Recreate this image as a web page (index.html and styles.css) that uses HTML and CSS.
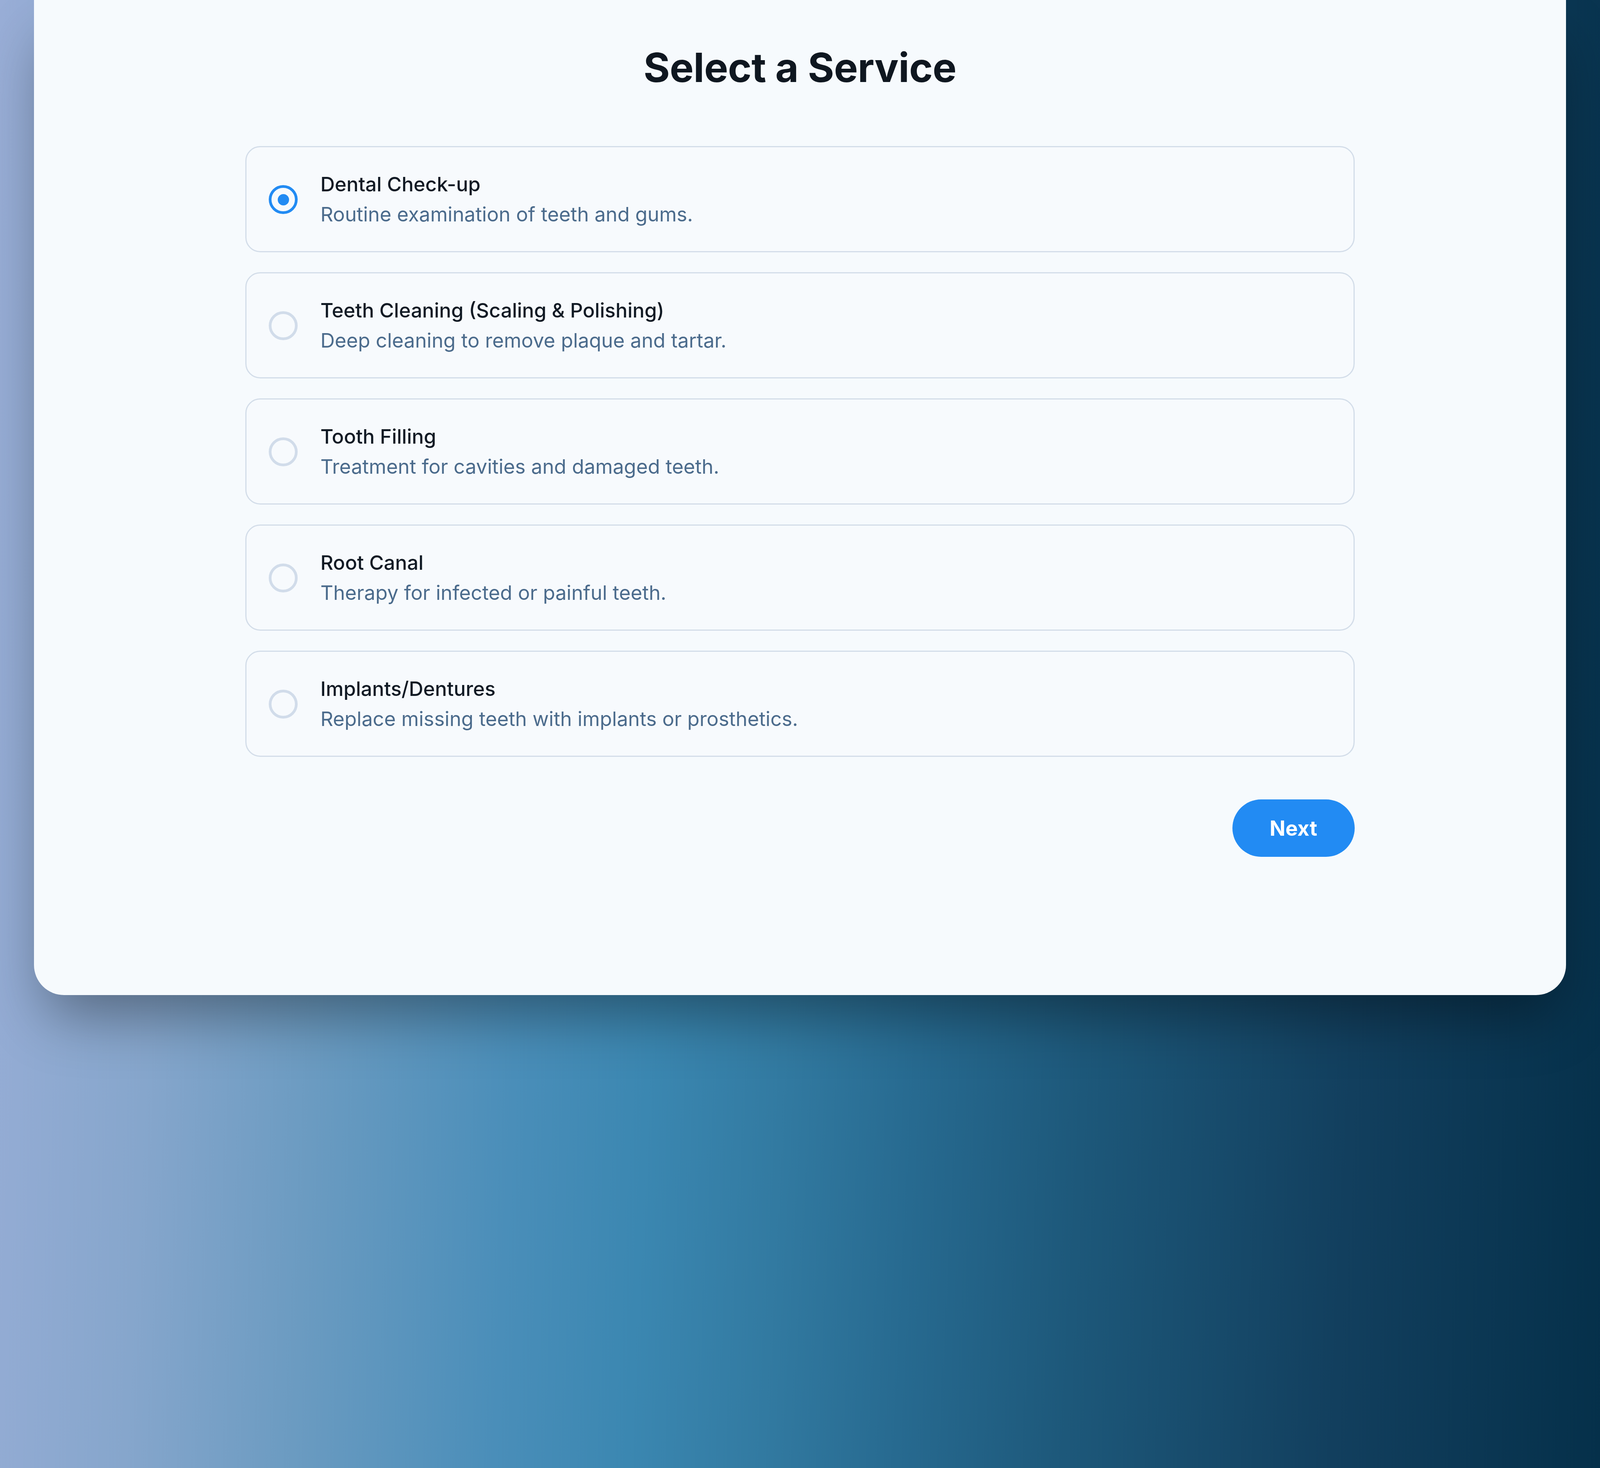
FILE: index.html
```html
<!DOCTYPE html>
<html lang="en">
<head>
<meta charset="utf-8">
<title>Select a Service</title>
<link rel="stylesheet" href="styles.css">
</head>
<body>
<main class="panel">
  <h1 class="heading">Select a Service</h1>
  <div class="list">
    <label class="card">
      <span class="radio radio-on"><span class="dot"></span></span>
      <span class="text">
        <span class="name">Dental Check-up</span>
        <span class="desc">Routine examination of teeth and gums.</span>
      </span>
    </label>
    <label class="card">
      <span class="radio"></span>
      <span class="text">
        <span class="name">Teeth Cleaning (Scaling &amp; Polishing)</span>
        <span class="desc">Deep cleaning to remove plaque and tartar.</span>
      </span>
    </label>
    <label class="card">
      <span class="radio"></span>
      <span class="text">
        <span class="name">Tooth Filling</span>
        <span class="desc">Treatment for cavities and damaged teeth.</span>
      </span>
    </label>
    <label class="card">
      <span class="radio"></span>
      <span class="text">
        <span class="name">Root Canal</span>
        <span class="desc">Therapy for infected or painful teeth.</span>
      </span>
    </label>
    <label class="card">
      <span class="radio"></span>
      <span class="text">
        <span class="name">Implants/Dentures</span>
        <span class="desc">Replace missing teeth with implants or prosthetics.</span>
      </span>
    </label>
  </div>
  <div class="actions">
    <button class="next" type="button">Next</button>
  </div>
</main>
</body>
</html>
```
FILE: styles.css
```css
html, body {
  margin: 0;
  padding: 0;
}
html {
  background: #3a86b0;
}
body {
  height: 100vh;
  min-height: 3759px;
  overflow: hidden;
  font-family: Inter, "Noto Sans", "Liberation Sans", sans-serif;
  background: linear-gradient(93deg, #99aed7 0%, #86a6cc 12%, #6b9bc1 22%, #4a8eb9 34%, #3b87b1 42%, #327aa1 50%, #276a90 58%, #1d587a 68%, #123f5e 84%, #05304a 100%);
}
.panel {
  box-sizing: border-box;
  width: 95.75%;
  margin: 0 auto;
  padding: 109px 0 354px;
  background: #f6fafd;
  border-radius: 0 0 77px 77px;
  box-shadow: 0 80px 150px -30px rgba(0, 0, 0, 0.38);
}
.heading {
  margin: 0 0 137px;
  text-align: center;
  font-size: 103px;
  line-height: 128px;
  font-weight: 700;
  color: #0f1720;
  letter-spacing: -0.5px;
}
.list {
  width: 72.4%;
  margin: 0 auto;
  display: flex;
  flex-direction: column;
  gap: 51px;
}
.card {
  box-sizing: border-box;
  height: 272px;
  border: 3px solid #d3dde9;
  border-radius: 38px;
  background: #f7fafd;
  display: flex;
  align-items: center;
  padding-left: 57px;
  gap: 58px;
}
.radio {
  box-sizing: border-box;
  flex: none;
  width: 74px;
  height: 74px;
  border-radius: 50%;
  border: 7px solid #d1dcea;
  display: flex;
  align-items: center;
  justify-content: center;
  margin-top: 2px;
}
.radio-on {
  border-color: #228bf3;
}
.dot {
  width: 29px;
  height: 29px;
  border-radius: 50%;
  background: #228bf3;
}
.text {
  display: flex;
  flex-direction: column;
  min-width: 0;
}
.name {
  font-size: 51px;
  line-height: 77px;
  font-weight: 500;
  color: #111a24;
  white-space: nowrap;
}
.desc {
  font-size: 51px;
  line-height: 77px;
  font-weight: 400;
  color: #4b6b8c;
  white-space: nowrap;
}
.actions {
  width: 72.4%;
  margin: 109px auto 0;
  display: flex;
  justify-content: flex-end;
}
.next {
  width: 313px;
  height: 147px;
  border: none;
  border-radius: 74px;
  background: #228bf3;
  color: #ffffff;
  font-family: Inter, "Noto Sans", "Liberation Sans", sans-serif;
  font-size: 53px;
  font-weight: 700;
  padding: 0;
}
```
